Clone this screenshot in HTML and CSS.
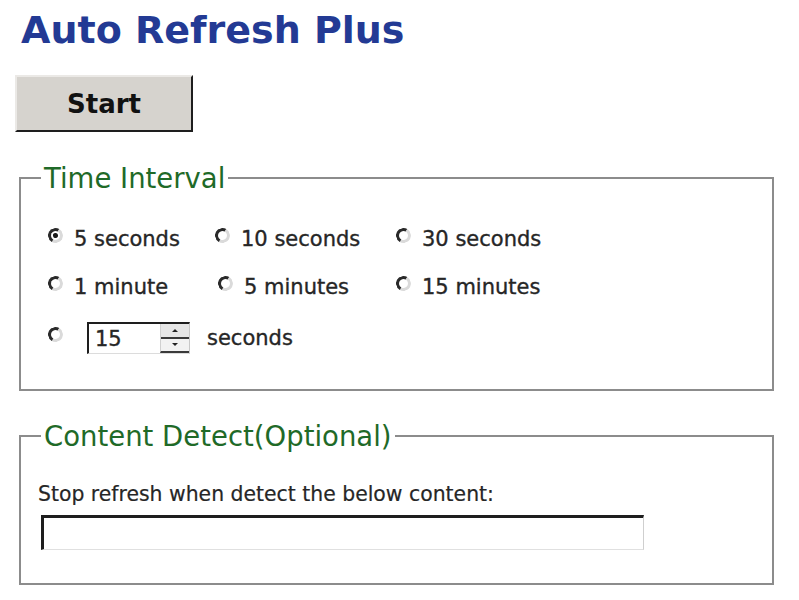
FILE: index.html
```html
<!DOCTYPE html>
<html lang="en">
<head>
<meta charset="utf-8">
<title>Auto Refresh Plus</title>
<link rel="stylesheet" href="styles.css">
</head>
<body>
  <h1 class="title">Auto Refresh Plus</h1>
  <button class="start" type="button">Start</button>

  <fieldset class="group">
    <legend class="group-title">Time Interval</legend>
    <div class="options">
      <div class="option-grid">
        <label class="option"><input type="radio" name="iv" class="radio" checked><span>5 seconds</span></label>
        <label class="option"><input type="radio" name="iv" class="radio"><span>10 seconds</span></label>
        <label class="option"><input type="radio" name="iv" class="radio"><span>30 seconds</span></label>
        <label class="option"><input type="radio" name="iv" class="radio"><span>1 minute</span></label>
        <label class="option option-shift"><input type="radio" name="iv" class="radio"><span>5 minutes</span></label>
        <label class="option"><input type="radio" name="iv" class="radio"><span>15 minutes</span></label>
      </div>
      <div class="custom-row">
        <input type="radio" name="iv" class="radio">
        <div class="spin">
          <input class="spin-field" type="text" value="15">
          <div class="spin-btns">
            <span class="spin-btn"><span class="arrow-up"></span></span>
            <span class="spin-btn"><span class="arrow-down"></span></span>
          </div>
        </div>
        <span class="unit">seconds</span>
      </div>
    </div>
  </fieldset>

  <fieldset class="group group-detect">
    <legend class="group-title">Content Detect(Optional)</legend>
    <div class="detect">
      <p class="detect-label">Stop refresh when detect the below content:</p>
      <input class="detect-input" type="text">
    </div>
  </fieldset>
</body>
</html>
```

FILE: styles.css
```css
html, body {
  margin: 0;
  padding: 0;
  background: #ffffff;
}

body {
  font-family: "DejaVu Sans", Verdana, sans-serif;
  color: #262626;
}

.title {
  margin: 7px 0 0 21px;
  font-family: "DejaVu Sans", Verdana, sans-serif;
  font-weight: bold;
  font-size: 38px;
  line-height: 46px;
  color: #233a94;
}

.start {
  display: block;
  box-sizing: border-box;
  margin: 22px 0 0 15px;
  width: 178px;
  height: 57px;
  padding: 0;
  background: #d6d3ce;
  border-style: solid;
  border-width: 2px;
  border-color: #ebe9e6 #1e1e1e #1e1e1e #ebe9e6;
  font-family: "DejaVu Sans", Verdana, sans-serif;
  font-weight: bold;
  font-size: 26px;
  color: #111111;
}

.group {
  box-sizing: border-box;
  margin: 32px 0 0 19px;
  width: 755px;
  padding: 0;
  border: 2px solid #8c8c8c;
  min-width: 0;
}

.group-detect {
  margin-top: 31px;
}

.group-title {
  margin-left: 20px;
  padding: 0 3px;
  font-family: "DejaVu Sans", Verdana, sans-serif;
  font-size: 27.5px;
  line-height: 28px;
  color: #1f6a28;
}

.options {
  padding: 23px 0 27px 27px;
  font-size: 21px;
  color: #262626;
  -webkit-text-stroke: 0.35px #262626;
}

.option-grid {
  display: grid;
  grid-template-columns: 167px 181px 1fr;
  grid-auto-rows: 48px;
}

.option {
  display: flex;
  align-items: center;
  gap: 11px;
}

.option-shift {
  margin-left: 3px;
}

.radio {
  appearance: none;
  -webkit-appearance: none;
  box-sizing: border-box;
  flex: none;
  width: 15px;
  height: 15px;
  margin: 0 0 7px 0;
  border-radius: 50%;
  border: 3px solid;
  border-color: #2a2a2a #dadada #dadada #2a2a2a;
  background: #ffffff;
  transform: rotate(-15deg);
  display: grid;
  place-items: center;
}

.radio:checked::after {
  content: "";
  width: 5px;
  height: 5px;
  border-radius: 50%;
  background: #1a1a1a;
}

.custom-row {
  display: flex;
  align-items: center;
  height: 48px;
  margin-top: 3px;
}

.spin {
  display: flex;
  box-sizing: border-box;
  width: 103px;
  height: 32px;
  margin-left: 24px;
  border-style: solid;
  border-width: 2px 1px 1px 2px;
  border-color: #1e1e1e #c8c8c8 #dcdcdc #1e1e1e;
  background: #ffffff;
}

.spin-field {
  flex: 1;
  min-width: 0;
  border: none;
  outline: none;
  padding: 0 0 0 6px;
  font-family: "DejaVu Sans", Verdana, sans-serif;
  font-size: 21px;
  color: #262626;
  -webkit-text-stroke: 0.35px #262626;
  background: transparent;
}

.spin-btns {
  display: flex;
  flex-direction: column;
  width: 28px;
  border-left: 1px solid #d0d0d0;
  border-bottom: 2px solid #3a3a3a;
}

.spin-btn {
  flex: 1;
  display: flex;
  align-items: center;
  justify-content: center;
  background: #e6e6e6;
}

.spin-btn + .spin-btn {
  border-top: 2px solid #3a3a3a;
  background: #f2f2f2;
}

.arrow-up {
  width: 0;
  height: 0;
  border-left: 3px solid transparent;
  border-right: 3px solid transparent;
  border-bottom: 3px solid #222222;
}

.arrow-down {
  width: 0;
  height: 0;
  border-left: 3px solid transparent;
  border-right: 3px solid transparent;
  border-top: 3px solid #222222;
}

.unit {
  margin-left: 17px;
}

.detect {
  padding: 32px 0 33px 17px;
}

.detect-label {
  margin: 0;
  font-family: "DejaVu Sans", Verdana, sans-serif;
  font-size: 20.4px;
  line-height: 24px;
  color: #262626;
  -webkit-text-stroke: 0.2px #262626;
}

.detect-input {
  display: block;
  box-sizing: border-box;
  margin: 9px 0 0 3px;
  width: 603px;
  height: 35px;
  padding: 0 6px;
  border-style: solid;
  border-width: 3px 1px 1px 3px;
  border-color: #1e1e1e #cfcfcf #e0e0e0 #1e1e1e;
  background: #ffffff;
  font-family: "DejaVu Sans", Verdana, sans-serif;
  font-size: 18px;
  outline: none;
}
```
